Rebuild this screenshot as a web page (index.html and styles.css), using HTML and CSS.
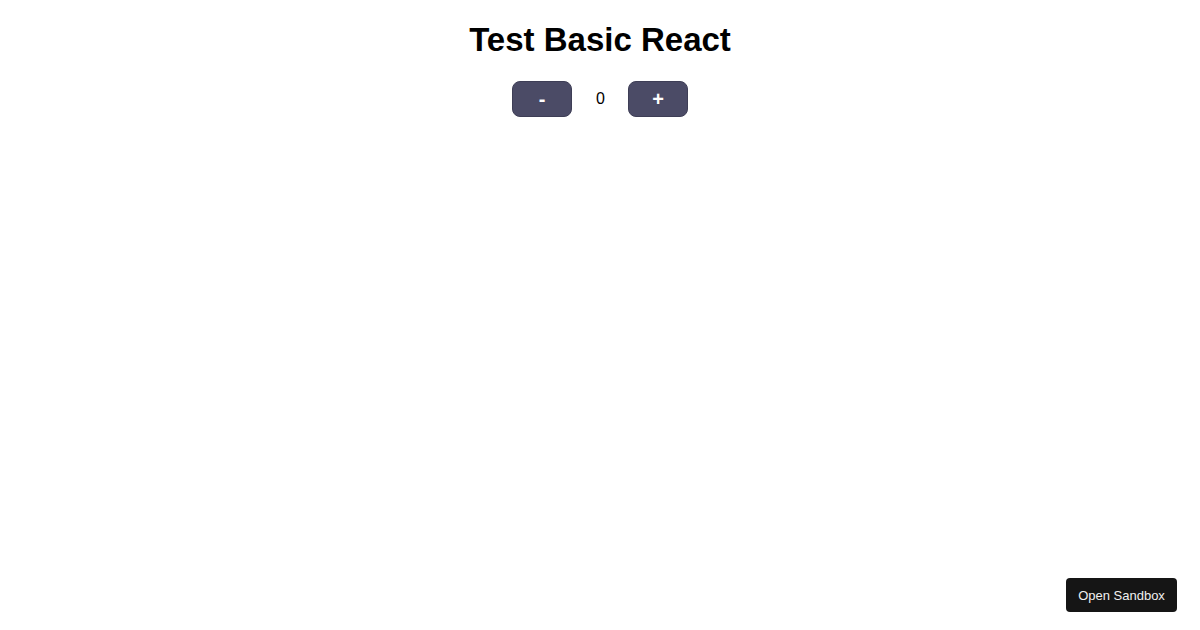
FILE: index.html
```html
<!DOCTYPE html>
<html lang="en">
<head>
  <meta charset="UTF-8">
  <meta name="viewport" content="width=device-width, initial-scale=1.0">
  <title>Test Basic React</title>
  <link rel="stylesheet" href="styles.css">
</head>
<body>
  <div class="app">
    <h1 class="title">Test Basic React</h1>
    <div class="counter">
      <button class="counter-btn">-</button>
      <span class="count">0</span>
      <button class="counter-btn">+</button>
    </div>
  </div>
  <a class="open-sandbox" href="#">Open Sandbox</a>
</body>
</html>
```

FILE: styles.css
```css
body {
  font-family: "Liberation Sans", Arial, sans-serif;
  margin: 8px;
  background-color: #fff;
  color: #000;
}

.app {
  text-align: center;
}

.title {
  font-size: 33px;
  font-weight: bold;
  margin: 13px 0 22px;
}

.counter {
  display: flex;
  justify-content: center;
  align-items: center;
  gap: 24px;
}

.counter-btn {
  width: 60px;
  height: 36px;
  font-family: "Liberation Sans", Arial, sans-serif;
  font-size: 20px;
  font-weight: bold;
  color: #fff;
  background-color: #4b4b66;
  border: 1px solid #3e3e56;
  border-radius: 8px;
  cursor: pointer;
  padding: 0;
}

.count {
  font-size: 16px;
  width: 8px;
}

.open-sandbox {
  position: fixed;
  right: 23px;
  bottom: 18px;
  width: 111px;
  height: 34px;
  display: flex;
  align-items: center;
  justify-content: center;
  box-sizing: border-box;
  background-color: #151515;
  color: #f0f0f0;
  font-size: 13px;
  text-decoration: none;
  border-radius: 4px;
}
```
